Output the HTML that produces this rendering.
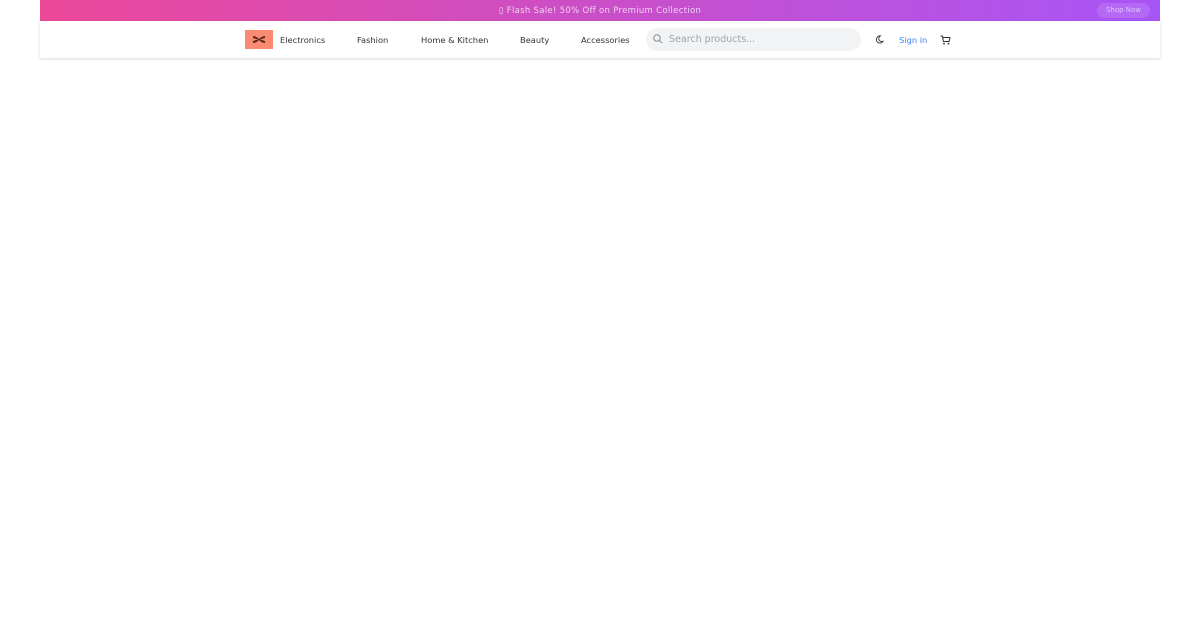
<!DOCTYPE html>
<html><head><meta charset="utf-8"><style>
*{margin:0;padding:0;box-sizing:border-box}
body{width:1200px;height:630px;background:#fff;font-family:"DejaVu Sans","Liberation Sans",sans-serif;position:relative;overflow:hidden}
.wrap{position:absolute;left:40px;top:0;width:1120px}
.banner{height:21px;background:linear-gradient(90deg,#ec4899,#a855f7);color:rgba(255,255,255,.75);font-size:8.5px;text-align:center;line-height:22px;letter-spacing:.3px;position:relative}
.shop{position:absolute;right:10px;top:3px;height:15px;width:53px;border-radius:8px;background:rgba(255,255,255,.12);font-size:7px;line-height:15px;color:rgba(255,255,255,.6);letter-spacing:0}
.nav{height:37px;background:#fff;box-shadow:0 1px 3px rgba(0,0,0,.15);position:relative;font-size:8.3px;color:#333}
.nav span{position:absolute;top:14px}
.logo{position:absolute;left:205px;top:9px;width:28px;height:19px;background:#fa8a72}
.search{position:absolute;left:606px;top:7px;width:215px;height:23px;border-radius:12px;background:#f2f3f5;color:#9ca3af;font-size:9.5px;line-height:23px;padding-left:23px}
</style></head><body>
<div class="wrap">
<div class="banner">&#9647; Flash Sale! 50% Off on Premium Collection<div class="shop">Shop Now</div></div>
<div class="nav">
<div class="logo"><svg width="28" height="19" viewBox="0 0 28 19"><path d="M8 6 Q11 6 14 9 Q17 6 20 6 L20 8 Q17 9 15 9.5 Q17 10 20 11 L20 13 Q17 13 14 10 Q11 13 8 13 L8 11 Q11 10 13 9.5 Q11 9 8 8Z" fill="#5a2a1a"/></svg></div>
<span style="left:240px">Electronics</span>
<span style="left:317px">Fashion</span>
<span style="left:381px">Home &amp; Kitchen</span>
<span style="left:480px">Beauty</span>
<span style="left:541px">Accessories</span>
<div class="search"><svg style="position:absolute;left:7px;top:6px" width="10" height="10" viewBox="0 0 10 10"><circle cx="4" cy="4" r="3.2" fill="none" stroke="#888" stroke-width="1"/><path d="M6.5 6.5 9 9" stroke="#888" stroke-width="1"/></svg>Search products...</div>
<svg style="position:absolute;left:835px;top:14px" width="9" height="9" viewBox="0 0 10 10"><path d="M6 1 A4 4 0 1 0 9 7 A3.2 3.2 0 0 1 6 1Z" fill="none" stroke="#333" stroke-width="1"/></svg>
<span style="left:859px;color:#3b82f6">Sign in</span>
<svg style="position:absolute;left:900px;top:14px" width="11" height="10" viewBox="0 0 11 10"><path d="M0.5 1 H2.3 L3.5 6.5 H9 L10 2.5 H2.8" fill="none" stroke="#333" stroke-width="1"/><circle cx="4" cy="8.6" r=".9" fill="#333"/><circle cx="8.5" cy="8.6" r=".9" fill="#333"/></svg>
</div>
</div>
</body></html>
